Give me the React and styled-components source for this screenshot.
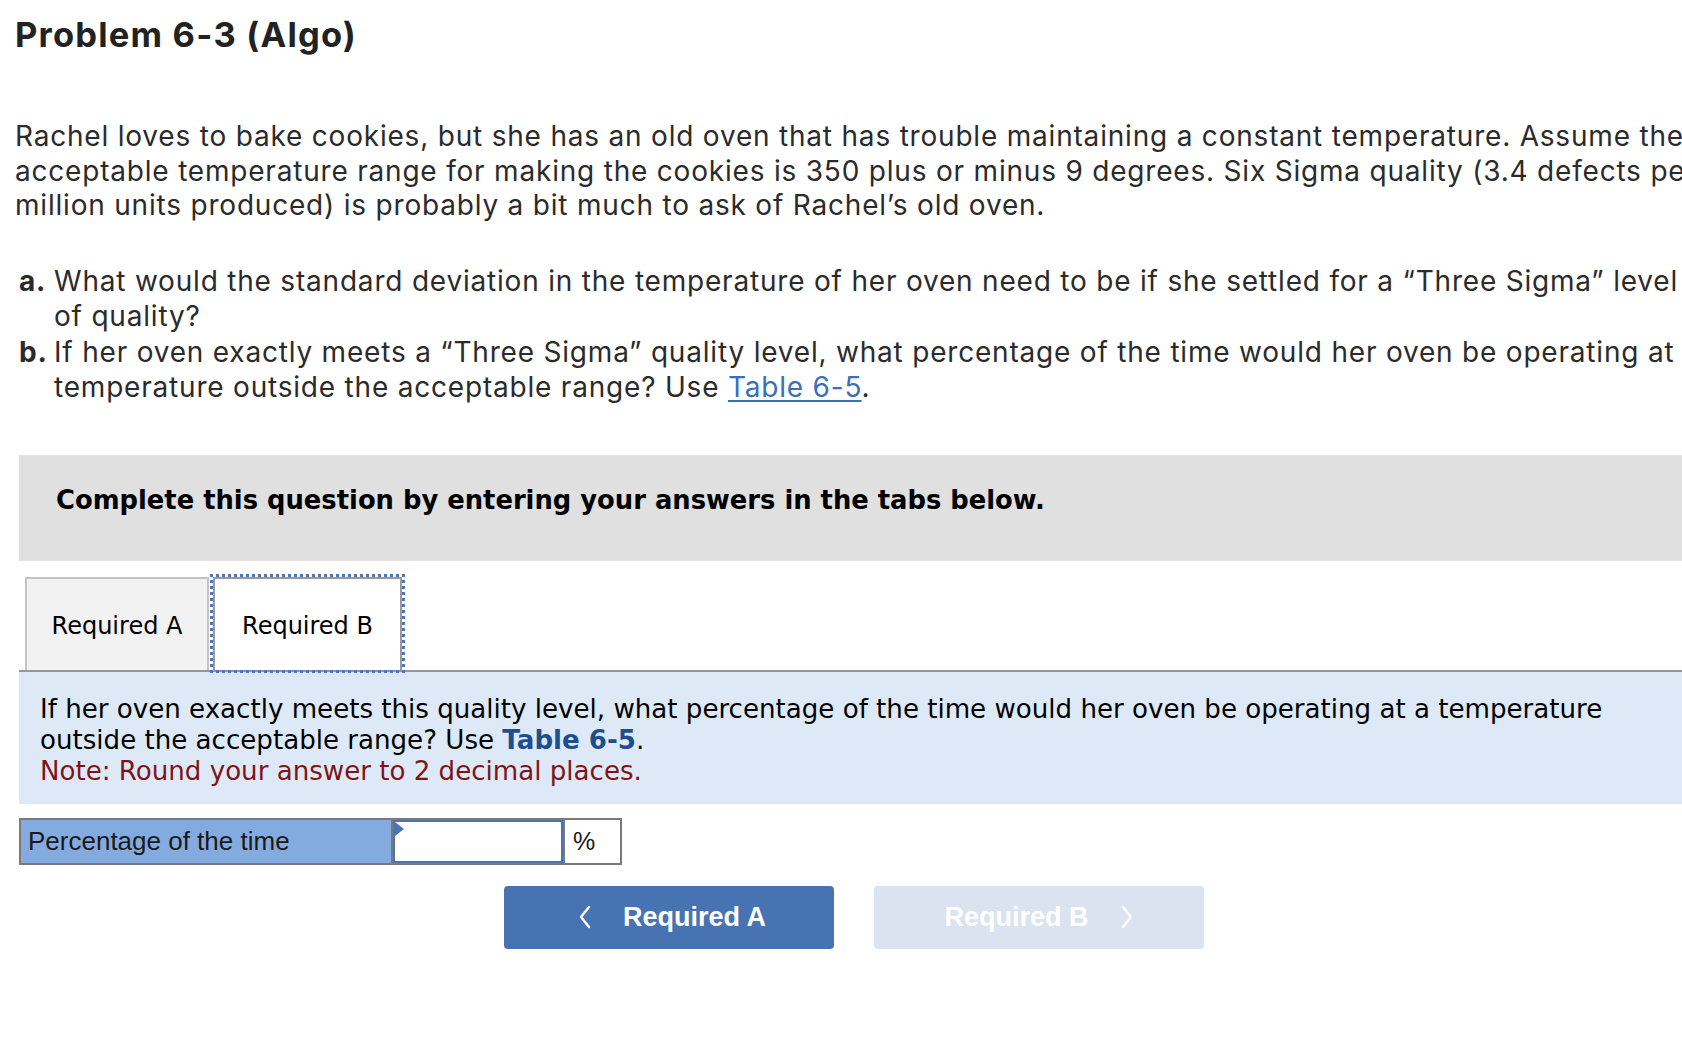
import React from 'react';
import styled, { createGlobalStyle } from 'styled-components';

const GlobalStyle = createGlobalStyle`
  html, body {
    margin: 0;
    padding: 0;
    background: #ffffff;
    overflow-x: hidden;
  }
  body {
    font-family: 'Inter', 'Lato', 'Liberation Sans', sans-serif;
    color: #2b2b2b;
  }
`;

const Page = styled.div`
  padding: 15px 0 0 15px;
  width: 1900px;
`;

const Title = styled.h1`
  margin: 0;
  font-size: 34.5px;
  line-height: 40px;
  font-weight: 700;
  letter-spacing: 1.2px;
  color: #222222;
`;

const Intro = styled.p`
  margin: 64px 0 0 0;
  font-size: 28px;
  line-height: 34.5px;
  letter-spacing: 0.8px;
  white-space: nowrap;
`;

const PartList = styled.ol`
  list-style: none;
  margin: 41px 0 0 0;
  padding: 0 0 0 4px;
  font-size: 28px;
  line-height: 35.5px;
  letter-spacing: 0.8px;
  white-space: nowrap;
`;

const PartItem = styled.li`
  display: flex;
`;

const PartLetter = styled.span`
  width: 35px;
  flex: none;
  font-weight: 700;
`;

const Link = styled.a`
  color: #3a70b9;
  text-decoration: underline;
  text-underline-offset: 3px;
`;

const Question = styled.section`
  margin: 49px 0 0 4px;
  font-family: 'DejaVu Sans', Verdana, sans-serif;
`;

const Banner = styled.div`
  background: #e0e0e0;
  height: 106px;
  box-sizing: border-box;
  padding: 30px 0 0 37px;
  font-size: 25.8px;
  line-height: 30px;
  font-weight: 700;
  color: #000000;
`;

const TabBar = styled.div`
  display: flex;
  align-items: flex-end;
  gap: 2px;
  margin-top: 16px;
  padding-left: 6px;
  border-bottom: 2px solid #969696;
`;

const Tab = styled.button`
  box-sizing: border-box;
  width: ${p => (p.$active ? '189px' : '184px')};
  height: 93px;
  padding: 4px 0 0 0;
  font-family: inherit;
  font-size: 24px;
  color: #000000;
  background: ${p => (p.$active ? '#ffffff' : '#f2f2f2')};
  border: 2px solid ${p => (p.$active ? '#999999' : '#c4c4c4')};
  border-bottom: none;
  outline: ${p => (p.$active ? '3px dotted #4a76c0' : 'none')};
  outline-offset: 0px;
  margin-left: ${p => (p.$active ? '2px' : '0')};
  cursor: pointer;
`;

const Prompt = styled.div`
  background: #dde9f7;
  padding: 22px 0 17px 21px;
  font-size: 26.1px;
  line-height: 31px;
  color: #000000;
  white-space: nowrap;
`;

const StrongRef = styled.b`
  color: #1d4e8f;
`;

const Note = styled.div`
  color: #7f1416;
`;

const AnswerRow = styled.div`
  display: flex;
  margin-top: 14px;
  width: 603px;
  height: 47px;
  box-sizing: border-box;
  border: 2px solid #7a7a7a;
  font-family: 'Liberation Sans', Arial, sans-serif;
`;

const AnswerLabel = styled.div`
  width: 372px;
  flex: none;
  display: flex;
  align-items: center;
  padding-left: 7px;
  box-sizing: border-box;
  background: #84abe0;
  border-right: 2px solid #7a7a7a;
  font-size: 26px;
  color: #1a1a1a;
`;

const InputCell = styled.div`
  position: relative;
  width: 170px;
  flex: none;
  box-sizing: border-box;
  border: 2px solid #4a72b8;
  background: #ffffff;
`;

const Flag = styled.span`
  position: absolute;
  top: 0;
  left: 0;
  width: 0;
  height: 0;
  border-top: 7px solid transparent;
  border-bottom: 7px solid transparent;
  border-left: 9px solid #4a72b8;
`;

const Input = styled.input`
  width: 100%;
  height: 100%;
  border: none;
  outline: none;
  box-sizing: border-box;
  background: transparent;
`;

const Unit = styled.div`
  flex: 1;
  display: flex;
  align-items: center;
  padding-left: 8px;
  border-left: 2px solid #7a7a7a;
  font-size: 25px;
  color: #1a1a1a;
`;

const NavRow = styled.div`
  display: flex;
  gap: 40px;
  margin: 21px 0 0 485px;
`;

const NavButton = styled.button`
  display: flex;
  align-items: center;
  justify-content: center;
  gap: 31px;
  width: 330px;
  height: 63px;
  padding: 0 0 0 ${p => (p.disabled ? '0' : '6px')};
  border: none;
  border-radius: 4px;
  background: ${p => (p.disabled ? '#dae3ef' : '#4873b3')};
  color: #ffffff;
  font-family: 'Liberation Sans', Arial, sans-serif;
  font-size: 27px;
  font-weight: 700;
  cursor: ${p => (p.disabled ? 'default' : 'pointer')};
  svg {
    flex: none;
  }
`;

const Chevron = ({ dir }) => (
  <svg width="14" height="26" viewBox="0 0 14 26" fill="none">
    <polyline
      points={dir === 'left' ? '11,3 3,13 11,23' : '3,3 11,13 3,23'}
      stroke="#ffffff"
      strokeWidth="2.4"
      strokeLinecap="round"
      strokeLinejoin="round"
    />
  </svg>
);

export default function App() {
  return (
    <Page>
      <GlobalStyle />
      <Title>Problem 6-3 (Algo)</Title>
      <Intro>
        Rachel loves to bake cookies, but she has an old oven that has trouble maintaining a constant temperature. Assume the
        <br />
        acceptable temperature range for making the cookies is 350 plus or minus 9 degrees. Six Sigma quality (3.4 defects per
        <br />
        million units produced) is probably a bit much to ask of Rachel’s old oven.
      </Intro>
      <PartList>
        <PartItem>
          <PartLetter>a.</PartLetter>
          <span>
            What would the standard deviation in the temperature of her oven need to be if she settled for a “Three Sigma” level
            <br />
            of quality?
          </span>
        </PartItem>
        <PartItem>
          <PartLetter>b.</PartLetter>
          <span>
            If her oven exactly meets a “Three Sigma” quality level, what percentage of the time would her oven be operating at a
            <br />
            temperature outside the acceptable range? Use <Link href="#table">Table 6-5</Link>.
          </span>
        </PartItem>
      </PartList>

      <Question>
        <Banner>Complete this question by entering your answers in the tabs below.</Banner>
        <TabBar>
          <Tab>Required A</Tab>
          <Tab $active>Required B</Tab>
        </TabBar>
        <Prompt>
          If her oven exactly meets this quality level, what percentage of the time would her oven be operating at a temperature
          <br />
          outside the acceptable range? Use <StrongRef>Table 6-5</StrongRef>.
          <Note>Note: Round your answer to 2 decimal places.</Note>
        </Prompt>
        <AnswerRow>
          <AnswerLabel>Percentage of the time</AnswerLabel>
          <InputCell>
            <Flag />
            <Input aria-label="Percentage of the time" />
          </InputCell>
          <Unit>%</Unit>
        </AnswerRow>
        <NavRow>
          <NavButton>
            <Chevron dir="left" />
            Required A
          </NavButton>
          <NavButton disabled>
            Required B
            <Chevron dir="right" />
          </NavButton>
        </NavRow>
      </Question>
    </Page>
  );
}
